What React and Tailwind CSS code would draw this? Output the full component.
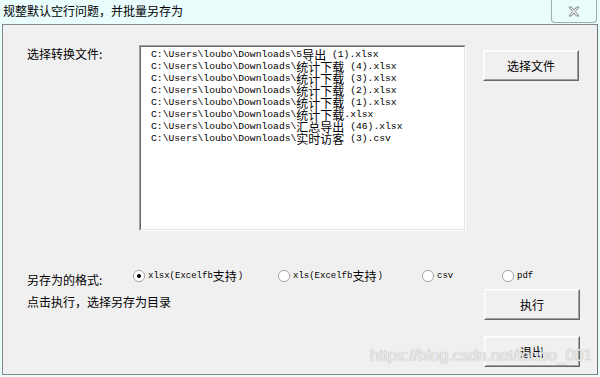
import React from "react";

const CJK = "font-['Noto_Sans_CJK_SC','Noto_Sans',sans-serif]";
const MONO = "font-['Liberation_Mono','DejaVu_Sans_Mono',monospace]";

const PREFIX = "C:\\Users\\loubo\\Downloads\\";
const files = [
  ["5", "导出", " (1).xlsx"],
  ["", "统计下载", " (4).xlsx"],
  ["", "统计下载", " (3).xlsx"],
  ["", "统计下载", " (2).xlsx"],
  ["", "统计下载", " (1).xlsx"],
  ["", "统计下载", ".xlsx"],
  ["", "汇总导出", " (46).xlsx"],
  ["", "实时访客", " (3).csv"],
];

function WinButton({ children, className = "" }) {
  return (
    <div
      className={`w-[96px] h-[31px] border border-t-white border-l-white border-r-[#696969] border-b-[#696969] ${className}`}
    >
      <div className="w-full h-full border border-t-[#f8f8f8] border-l-[#f8f8f8] border-r-[#a0a0a0] border-b-[#a0a0a0] bg-[#f0f0f0] flex items-center justify-center">
        <span className={`${CJK} text-[12px] leading-[16px] text-black`}>{children}</span>
      </div>
    </div>
  );
}

function Radio({ checked, mono, cjk, tail, width }) {
  return (
    <div className="flex items-center h-[16px]" style={{ width }}>
      <div className="w-[12px] h-[12px] rounded-full border border-[#9a9a9a] bg-gradient-to-br from-[#e2e2e2] to-white flex items-center justify-center shrink-0">
        <div className="w-[10px] h-[10px] rounded-full bg-white flex items-center justify-center">
          {checked && <div className="w-[4px] h-[4px] rounded-full bg-black" />}
        </div>
      </div>
      <div className="ml-[3px] flex items-center whitespace-pre text-black">
        <span className={`${MONO} text-[9px] leading-[12px]`}>{mono}</span>
        {cjk && <span className={`${CJK} text-[12px] leading-[12px]`}>{cjk}</span>}
        {tail && <span className={`${MONO} text-[9px] leading-[12px] ml-[1px]`}>{tail}</span>}
      </div>
    </div>
  );
}

export default function App() {
  return (
    <div className="relative w-[600px] h-[377px] bg-[#e9fdfd] overflow-hidden flex flex-col">
      {/* Title bar */}
      <div className="h-[24px] flex items-start justify-between shrink-0">
        <div className={`${CJK} text-[12px] leading-[16px] text-black pl-[3px] pt-[3px]`}>
          规整默认空行问题，并批量另存为
        </div>
        <div className="mr-[3px] w-[46px] h-[23px] border border-t-0 border-[#a3abab] rounded-b-[4px] flex items-center justify-center bg-[#eafcfc]">
          <svg width="12" height="11" viewBox="0 0 12 11">
            <path
              d="M1 1 H3.5 L6 4 L8.5 1 H11 L7.3 5.5 L11 10 H8.5 L6 7 L3.5 10 H1 L4.7 5.5 Z"
              fill="#f4f6f6"
              stroke="#7d8585"
              strokeWidth="1"
              strokeLinejoin="round"
            />
          </svg>
        </div>
      </div>

      {/* Client area */}
      <div className="ml-[2px] w-[596px] h-[351px] border border-[#808a8a] border-r-[#6a7575] bg-[#f0f0f0] flex flex-col">
        {/* Row 1 */}
        <div className="flex items-start pt-[20px]">
          <div className={`${CJK} w-[136px] pl-[24px] mt-[1px] text-[12px] leading-[16px] text-black`}>
            选择转换文件:
          </div>
          <div className="w-[327px] h-[186px] border border-t-[#a0a0a0] border-l-[#a0a0a0] border-r-white border-b-white">
            <div className="w-full h-full border border-t-[#696969] border-l-[#696969] border-r-[#e3e3e3] border-b-[#e3e3e3] bg-white pl-[10px] pt-[2px]">
              {files.map(([num, cjk, rest], i) => (
                <div key={i} className="h-[12px] flex items-center whitespace-pre text-black">
                  <span className={`${MONO} text-[9.7px] leading-[12px]`}>{PREFIX + num}</span>
                  <span className={`${CJK} text-[12px] leading-[12px]`}>{cjk}</span>
                  <span className={`${MONO} text-[9.7px] leading-[12px]`}>{rest}</span>
                </div>
              ))}
            </div>
          </div>
          <WinButton className="ml-[17px] mt-[5px]">选择文件</WinButton>
        </div>

        {/* Format row */}
        <div className="flex items-start h-[16px] pl-[24px] mt-[37px]">
          <div className={`${CJK} w-[106px] mt-[4px] text-[12px] leading-[16px] text-black`}>
            另存为的格式:
          </div>
          <Radio checked width={145} mono="xlsx(Excelfb" cjk="支持" tail=")" />
          <Radio width={144} mono="xls(Excelfb" cjk="支持" tail=")" />
          <Radio width={80} mono="csv" />
          <Radio width={80} mono="pdf" />
        </div>

        {/* Execute row */}
        <div className="flex items-start">
          <div className={`${CJK} pl-[24px] mt-[10px] text-[12px] leading-[16px] text-black`}>
            点击执行，选择另存为目录
          </div>
          <WinButton className="ml-auto mr-[17px] mt-[5px]">执行</WinButton>
        </div>

        <div className="flex justify-end mt-[16px]">
          <WinButton className="mr-[17px]">退出</WinButton>
        </div>
      </div>

      {/* Watermark */}
      <div className="absolute left-[370px] top-[346px] font-['Liberation_Sans',Arial,sans-serif] text-[16px] leading-[20px] text-[#ececec] [text-shadow:0_0_1px_#9a9a9a]">
        https://blog.csdn.net/loubo_001
      </div>
    </div>
  );
}
